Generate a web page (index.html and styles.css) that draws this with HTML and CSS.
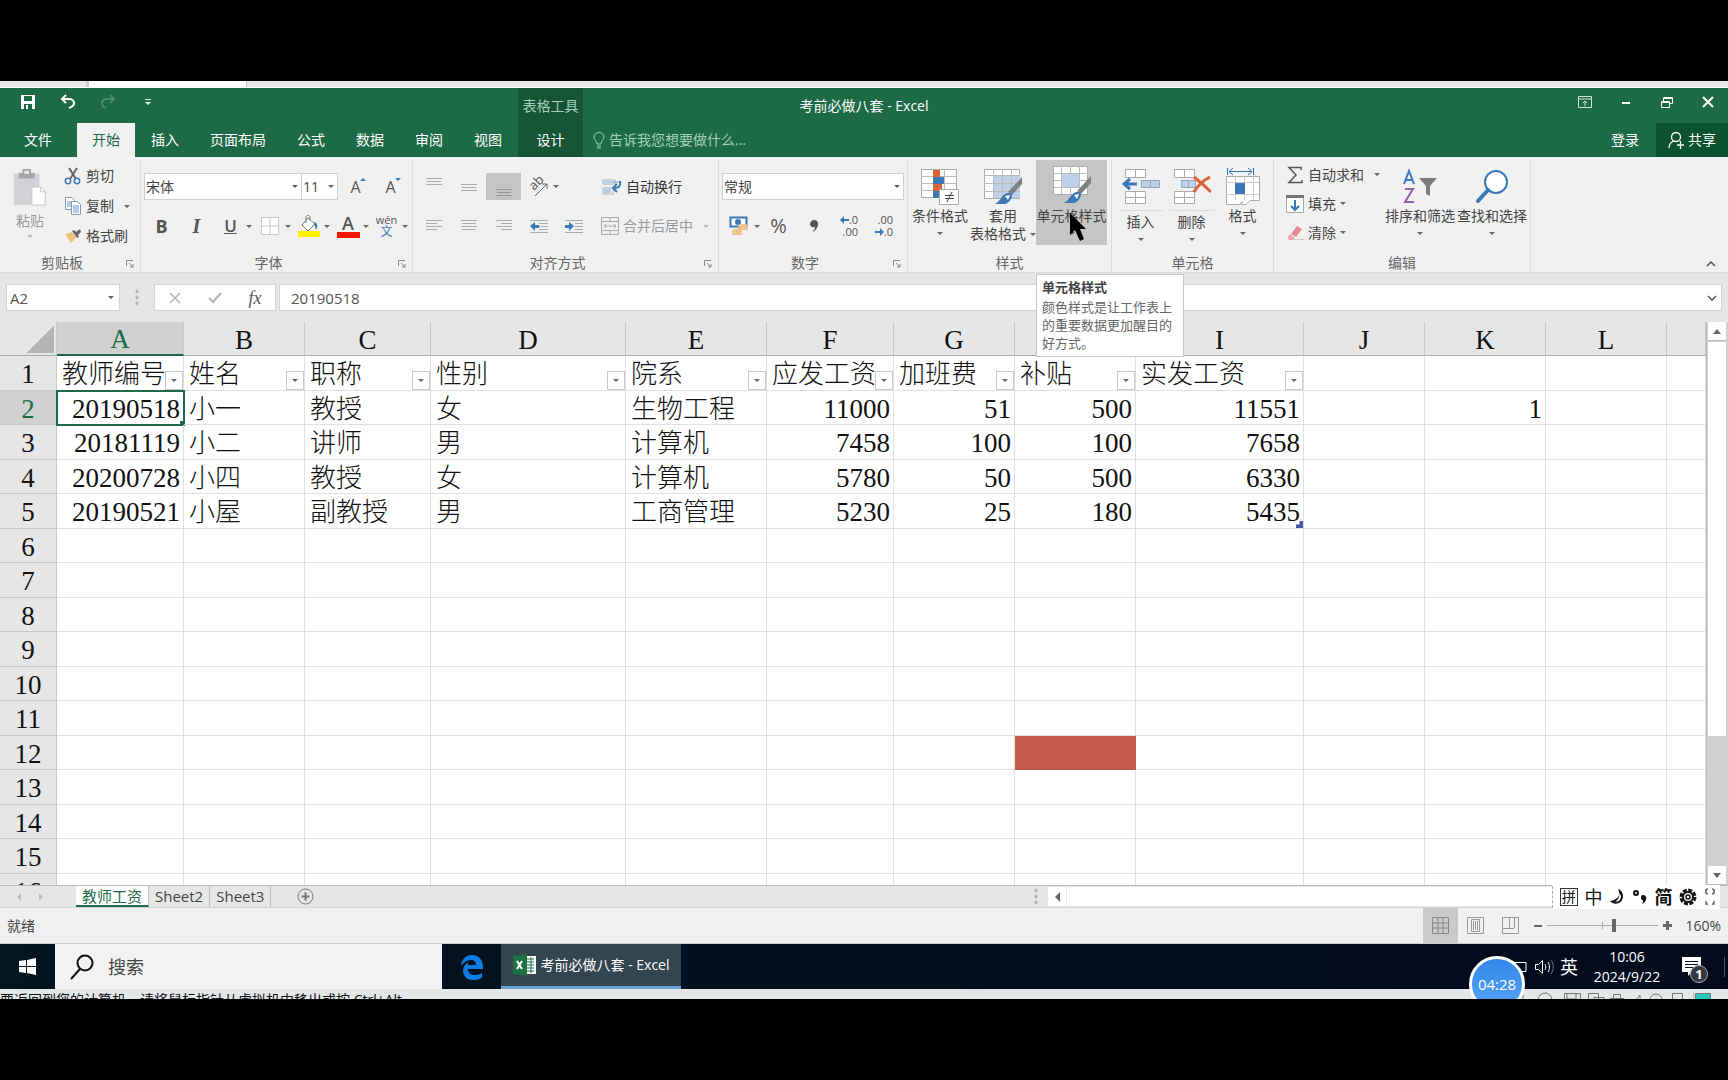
FILE: index.html
```html
<!DOCTYPE html>
<html lang="zh-CN">
<head>
    <meta charset="UTF-8">
    <meta name="viewport" content="width=device-width, initial-scale=1.0">
    <title>考前必做八套 - Excel</title>
    <link rel="stylesheet" href="styles.css">
</head>
<body>
    <div class="screen">
        <div class="back-window"><span></span><span class="back-tab"></span></div>

        <header class="title-bar">
            <div class="title-side">
                <div class="quick-access">
                    <button class="icon-btn" aria-label="保存"><svg width="16" height="16" viewBox="0 0 16 16"><path d="M1 1h14v14H1z" fill="#fff"/><path d="M4 2h8v5H4zM4 10h8v5H4z" fill="#1d6b46"/><path d="M6 11h2v4H6z" fill="#fff"/></svg></button>
                    <button class="icon-btn" aria-label="撤消"><svg width="16" height="16" viewBox="0 0 16 16" fill="none" stroke="#fff" stroke-width="2"><path d="M6 1L2 5l4 4M2 5h7c3 0 5 2 5 4s-2 4-5 5"/></svg></button>
                    <button class="icon-btn" aria-label="恢复"><svg width="16" height="16" viewBox="0 0 16 16" fill="none" stroke="#4b8a6b" stroke-width="2"><path d="M10 1l4 4-4 4M14 5H8C4 5 2 7 2 9s1 4 4 5"/></svg></button>
                    <button class="icon-btn" aria-label="自定义"><svg width="8" height="8" viewBox="0 0 8 8" fill="#dfeee6"><path d="M1 1h6v1H1zM1 4h6L4 7z"/></svg></button>
                </div>
                <div class="context-title">表格工具</div>
            </div>
            <h1>考前必做八套 - Excel</h1>
            <div class="title-side window-controls">
                <button class="icon-btn" aria-label="功能区显示选项"><svg width="14" height="12" viewBox="0 0 14 12" fill="none" stroke="#cfe3d8"><path d="M.5.5h13v11H.5zM.5 3h13M7 10V5M5 7l2-2 2 2"/></svg></button>
                <button class="icon-btn" aria-label="最小化"><svg width="8" height="8" viewBox="0 0 8 8"><path d="M0 4h8v2H0z" fill="#fff"/></svg></button>
                <button class="icon-btn" aria-label="还原"><svg width="12" height="12" viewBox="0 0 12 12" fill="none" stroke="#fff"><path d="M.5 5.5h8v6h-8zM.5 6.5h8M2.500 5V1.500h9v6h-3M2.500 2.500h9"/></svg></button>
                <button class="icon-btn" aria-label="关闭"><svg width="12" height="12" viewBox="0 0 12 12" stroke="#fff" stroke-width="2"><path d="M1 1l10 10M11 1L1 11"/></svg></button>
            </div>
        </header>

        <nav class="tabs">
            <button class="tab file-tab">文件</button>
            <button class="tab active">开始</button>
            <button class="tab">插入</button>
            <button class="tab">页面布局</button>
            <button class="tab">公式</button>
            <button class="tab">数据</button>
            <button class="tab">审阅</button>
            <button class="tab">视图</button>
            <button class="tab context-tab">设计</button>
            <button class="tell-me"><svg width="12" height="17" viewBox="0 0 12 17" fill="none" stroke="#a5cdb8"><path d="M4 12c0-3-3-4-3-7a5 4.500 0 0 1 10 0c0 3-3 4-3 7zM4 14h4M4 16h4"/></svg>告诉我您想要做什么...</button>
            <button class="tab sign-in">登录</button>
            <button class="tab share"><svg width="16" height="18" viewBox="0 0 16 18" fill="none" stroke="#fff" stroke-width="1.300"><circle cx="8" cy="6" r="4.500"/><path d="M1 17c0-4 2-6 5-7M9 14h7M12.500 10v8"/></svg>共享</button>
        </nav>

        <section class="ribbon">
            <div class="group clipboard">
                <div class="group-body">
                    <button class="big-btn paste disabled">
                        <svg width="36" height="40" viewBox="0 0 36 40"><path d="M1 6h27v33H1z" fill="#d3d1d5"/><path d="M6 5h4V1h9v4h4v6H6z" fill="#a7a7a7"/><path d="M12 3h5v3h-5z" fill="#eee"/><path d="M20 20h9l5 5v14H20z" fill="#fff" stroke="#c4c4c4"/><path d="M29 20v5h5" fill="none" stroke="#c4c4c4"/></svg>
                        <span>粘贴</span><i class="caret"></i>
                    </button>
                    <div class="stack">
                        <button class="small-btn"><svg width="18" height="18" viewBox="0 0 18 18" fill="none" stroke-width="1.500"><path d="M5 1l7 11M13 1L6 12" stroke="#666" stroke-width="2"/><circle cx="4" cy="14" r="2.700" stroke="#3b78b5"/><circle cx="13" cy="14" r="2.700" stroke="#3b78b5"/></svg>剪切</button>
                        <button class="small-btn"><svg width="18" height="18" viewBox="0 0 18 18" fill="#fff" stroke="#8b9aab"><path d="M1.500.5h6l3 3v9h-9z"/><path d="M3 5h5M3 7h4M3 9h4" stroke="#5f9ad0"/><path d="M7.500 4.500h6l3 3v10h-9z"/><path d="M9 9h6M9 11h6M9 13h6M9 15h6" stroke="#5f9ad0"/></svg>复制<i class="caret spaced"></i></button>
                        <button class="small-btn"><svg width="18" height="16" viewBox="0 0 18 16"><path d="M1 6l7-2 4 6-5 5z" fill="#efc27b"/><path d="M8 3l2-1 2 2 4-3 1 3-3 3 1 2-2 1z" fill="#666"/></svg>格式刷</button>
                    </div>
                </div>
                <div class="group-name with-launcher">剪贴板<svg class="launcher" width="8" height="8" viewBox="0 0 8 8"><path d="M.5 6V.5H7M3 3l4 4M7 4v3H4" fill="none" stroke="#888"/></svg></div>
            </div>

            <div class="group font">
                <div class="group-body rows">
                    <div class="row">
                        <label class="combo font-name"><input type="text" value="宋体" aria-label="字体"><i class="caret"></i></label>
                        <label class="combo font-size"><input type="text" value="11" aria-label="字号"><i class="caret"></i></label>
                        <button class="tool" aria-label="增大字号"><span class="letter grow">A<i class="up"></i></span></button>
                        <button class="tool" aria-label="减小字号"><span class="letter grow">A<i class="down"></i></span></button>
                    </div>
                    <div class="row">
                        <button class="tool bold">B</button>
                        <button class="tool italic">I</button>
                        <button class="tool split underline"><span>U</span><i class="caret"></i></button>
                        <button class="tool split" aria-label="边框"><svg width="18" height="18" viewBox="0 0 18 18"><path d="M.5.5h17v17H.5zM9 0v18M0 9h18" fill="#fff" stroke="#c9c9c9"/></svg><i class="caret"></i></button>
                        <button class="tool split" aria-label="填充颜色"><svg width="22" height="22" viewBox="0 0 22 22"><path d="M10 3l7 6-7 7-6-6z" fill="#fff" stroke="#777"/><path d="M8 8V2c0-2 4-2 4 0v3" fill="none" stroke="#777"/><path d="M16 7c4 1 4 5 2 8-1-3-1-5-2-8z" fill="#3b78b5"/><path d="M0 16h22v6H0z" fill="#fff200"/></svg><i class="caret"></i></button>
                        <button class="tool split font-color" aria-label="字体颜色"><span>A</span><i class="caret"></i></button>
                        <button class="tool split pinyin" aria-label="拼音"><span>wén<b>文</b></span><i class="caret"></i></button>
                    </div>
                </div>
                <div class="group-name with-launcher">字体<svg class="launcher" width="8" height="8" viewBox="0 0 8 8"><path d="M.5 6V.5H7M3 3l4 4M7 4v3H4" fill="none" stroke="#888"/></svg></div>
            </div>

            <div class="group align">
                <div class="group-body rows">
                    <div class="row">
                        <button class="tool" aria-label="顶端对齐"><svg width="16" height="20" viewBox="0 0 16 20" stroke="#aaa"><path d="M0 1.500h16M1 4.500h14M0 7.500h16"/></svg></button>
                        <button class="tool" aria-label="垂直居中"><svg width="16" height="20" viewBox="0 0 16 20" stroke="#aaa"><path d="M0 7.500h16M1 10.500h14M0 13.500h16"/></svg></button>
                        <button class="tool pressed" aria-label="底端对齐"><svg width="16" height="20" viewBox="0 0 16 20" stroke="#999"><path d="M0 12.500h16M1 15.500h14M0 18.500h16"/></svg></button>
                        <button class="tool split" aria-label="方向"><svg class="ab" width="20" height="20" viewBox="0 0 20 20"><text class="ab-text" x="0" y="0" transform="translate(6 14) rotate(-45)">ab</text><path d="M7 19L19 7M14 7h5v5" fill="none" stroke="#666"/></svg><i class="caret"></i></button>
                        <button class="small-btn wrap-text"><svg width="20" height="18" viewBox="0 0 20 18" fill="none"><path d="M1 2h12v4H1zM1 10h10v6H1z" fill="#fff" stroke="#aaa"/><path d="M2 4h15M2 12h7M2 14h7" stroke="#5f9ad0"/><path d="M18 3c1 5-1 7-5 7M15 6l-4 4 4 4" stroke="#3b78b5" stroke-width="2"/></svg>自动换行</button>
                    </div>
                    <div class="row">
                        <button class="tool" aria-label="左对齐"><svg width="16" height="12" viewBox="0 0 16 12" stroke="#aaa"><path d="M0 .5h16M0 3.500h11M0 6.500h16M0 9.500h11"/></svg></button>
                        <button class="tool" aria-label="居中"><svg width="16" height="12" viewBox="0 0 16 12" stroke="#aaa"><path d="M0 .5h16M1 3.500h14M0 6.500h16M1 9.500h14"/></svg></button>
                        <button class="tool" aria-label="右对齐"><svg width="16" height="12" viewBox="0 0 16 12" stroke="#aaa"><path d="M0 .5h16M5 3.500h11M0 6.500h16M5 9.500h11"/></svg></button>
                        <button class="tool" aria-label="减少缩进"><svg width="18" height="14" viewBox="0 0 18 14"><path d="M0 1.500h18M9 4.500h9M9 7.500h9M9 10.500h9M0 13.500h18" stroke="#aaa"/><path d="M0 7l5-4v3h4v3H5v3z" fill="#3b78b5"/></svg></button>
                        <button class="tool" aria-label="增加缩进"><svg width="18" height="14" viewBox="0 0 18 14"><path d="M0 1.500h18M10 4.500h8M10 7.500h8M10 10.500h8M0 13.500h18" stroke="#aaa"/><path d="M9 7L4 3v3H0v3h4v3z" fill="#3b78b5"/></svg></button>
                        <button class="small-btn merge disabled"><svg width="18" height="18" viewBox="0 0 18 18" fill="none" stroke="#aaa"><path d="M.5.5h17v17H.5zM0 4.500h18M0 13.500h18M9 0v4M9 14v4M3 9h12M5 7L3 9l2 2M13 7l2 2-2 2"/></svg>合并后居中<i class="caret"></i></button>
                    </div>
                </div>
                <div class="group-name with-launcher">对齐方式<svg class="launcher" width="8" height="8" viewBox="0 0 8 8"><path d="M.5 6V.5H7M3 3l4 4M7 4v3H4" fill="none" stroke="#888"/></svg></div>
            </div>

            <div class="group number">
                <div class="group-body rows">
                    <div class="row">
                        <label class="combo number-format"><select aria-label="数字格式"><option>常规</option></select><i class="caret"></i></label>
                    </div>
                    <div class="row">
                        <button class="tool split" aria-label="会计数字格式"><svg width="20" height="20" viewBox="0 0 20 20"><path d="M1.500 1.500h16v9h-16z" fill="#fff" stroke="#3b78b5" stroke-width="2"/><circle cx="9" cy="6" r="3" fill="#3b78b5"/><g fill="#f0c487"><ellipse cx="14" cy="10" rx="5" ry="2"/><path d="M9 12h10v2H9z"/><ellipse cx="8" cy="15" rx="5" ry="2"/><path d="M3 17h10v2H3z"/></g></svg><i class="caret"></i></button>
                        <button class="tool percent">%</button>
                        <button class="tool" aria-label="千位分隔样式"><svg width="10" height="14" viewBox="0 0 10 14"><path d="M5 1a4 4 0 0 1 4 4c0 4-3 7-6 8 2-2 3-3 3-5C3 9 1 7 1 5s2-4 4-4z" fill="#555"/></svg></button>
                        <button class="tool decimals"><span><svg width="9" height="8" viewBox="0 0 9 8"><path d="M0 4l4-4v3h5v2H4v3z" fill="#3b78b5"/></svg>.0</span><span>.00</span></button>
                        <button class="tool decimals"><span>.00</span><span><svg width="9" height="8" viewBox="0 0 9 8"><path d="M9 4L5 0v3H0v2h5v3z" fill="#3b78b5"/></svg>.0</span></button>
                    </div>
                </div>
                <div class="group-name with-launcher">数字<svg class="launcher" width="8" height="8" viewBox="0 0 8 8"><path d="M.5 6V.5H7M3 3l4 4M7 4v3H4" fill="none" stroke="#888"/></svg></div>
            </div>

            <div class="group styles">
                <div class="group-body">
                    <button class="big-btn">
                        <svg width="38" height="36" viewBox="0 0 38 36"><path d="M.5.5h35v28H.5z" fill="#fff" stroke="#aaa"/><path d="M12.500 0v28M23.500 0v28M0 7.500h36M0 14.500h36M0 21.500h36" stroke="#bbb"/><path d="M12 1h7v7h-7zM12 15h9v7h-9z" fill="#dd6237"/><path d="M12 8h11v7H12zM12 22h7v7h-7z" fill="#3b78b5"/><path d="M18.500 20.500h19v15h-19z" fill="#fff" stroke="#aaa"/><path d="M24 26.500h9M24 29.500h9M31 23l-5 10" stroke="#444" fill="none"/></svg>
                        <span>条件格式</span><i class="caret"></i>
                    </button>
                    <button class="big-btn table-format">
                        <svg width="38" height="36" viewBox="0 0 38 36"><path d="M.5.5h35v29H.5z" fill="#fff" stroke="#aaa"/><path d="M9 7h27v22H9z" fill="#bdd0e8"/><path d="M9.500 0v30M18.500 0v30M27.500 0v30M0 6.500h36M0 14.500h36M0 22.500h36" stroke="#bbb" fill="none"/><path d="M38 8v7L28 26l-4-3z" fill="#808080"/><path d="M27 24c3 4-2 10-6 11H11c6-3 6-9 12-11z" fill="#3b78b5"/><path d="M21 27l5-1-2 5z" fill="#fff"/></svg>
                        <span>套用</span><span class="second-line">表格格式<i class="caret"></i></span>
                    </button>
                    <div class="hovered-wrap">
                        <button class="big-btn hovered">
                            <svg width="38" height="38" viewBox="0 0 38 38"><path d="M.5.5h34v28H.5z" fill="#fff" stroke="#aaa"/><path d="M8 8h18v13H8z" fill="#bdd0e8"/><path d="M8.500 0v28M17.500 0v8M26.500 0v28M17.500 21v8M0 7.500h35M0 14.500h8M27 14.500h8M0 21.500h35" stroke="#bbb" fill="none"/><path d="M38 10v7L28 28l-4-3z" fill="#808080"/><path d="M27 26c3 4-2 10-6 11H11c6-3 6-9 12-11z" fill="#3b78b5"/><path d="M21 29l5-1-2 5z" fill="#fff"/></svg>
                            <span>单元格样式</span><i class="caret"></i>
                        </button>
                        <svg class="pointer" width="18" height="30" viewBox="0 0 18 30"><path d="M1 1v22l5-5 5 11 4-2-4-10h6z" fill="#000"/></svg>
                        <div class="tooltip"><strong>单元格样式</strong><p>颜色样式是让工作表上的重要数据更加醒目的好方式。</p></div>
                    </div>
                </div>
                <div class="group-name">样式</div>
            </div>

            <div class="group cells">
                <div class="group-body">
                    <button class="big-btn divided">
                        <svg width="38" height="36" viewBox="0 0 38 36"><path d="M3.500.5h20v8h-20zM13.500 0v8M3.500 22.500h20v12h-20zM13.500 22v12M3 28.500h20" fill="#fff" stroke="#aaa"/><path d="M19.500 11.500h18v7h-18zM28.500 11v8" fill="#bdd0e8" stroke="#8fa6bf"/><path d="M15 15H3M8 10l-6 5 6 5" fill="none" stroke="#3b78b5" stroke-width="3"/></svg>
                        <span>插入</span><i class="caret"></i>
                    </button>
                    <button class="big-btn divided">
                        <svg width="38" height="36" viewBox="0 0 38 36"><path d="M1.500.5h20v8h-20zM11.500 0v8M1.500 22.500h20v12h-20zM11.500 22v12M1 28.500h20" fill="#fff" stroke="#aaa"/><path d="M8.500 11.500h14v7h-14zM15.500 11v8" fill="#bdd0e8" stroke="#8fa6bf"/><path d="M21 8c5 4 11 9 17 15M37 8c-6 3-12 8-16 15" fill="none" stroke="#dd6237" stroke-width="3"/></svg>
                        <span>删除</span><i class="caret"></i>
                    </button>
                    <button class="big-btn">
                        <svg width="34" height="38" viewBox="0 0 34 38"><path d="M1.500 0v7M27.500 0v7M3 3.500h23M7 0L3 3.500 7 7M22 0l4 3.500L22 7" fill="none" stroke="#3b78b5"/><path d="M.5 8.500h33v24H24l-4 4h-5l2-3-4 3h-3H.5z" fill="#fff" stroke="#aaa"/><path d="M9.500 8v24M18.500 8v24M27.500 8v24M0 14.500h33M0 26.500h33" stroke="#ccc"/><path d="M9 15h10v11H9z" fill="#3b78b5"/></svg>
                        <span>格式</span><i class="caret"></i>
                    </button>
                </div>
                <div class="group-name">单元格</div>
            </div>

            <div class="group editing">
                <div class="group-body">
                    <div class="stack">
                        <button class="small-btn"><svg width="18" height="18" viewBox="0 0 18 18"><path d="M15 4V1.500H3L10 9l-7 7.500h13V14" fill="none" stroke="#555" stroke-width="1.500"/></svg>自动求和<i class="caret spaced"></i></button>
                        <button class="small-btn"><svg width="18" height="18" viewBox="0 0 18 18"><path d="M.5.5h17v17H.5z" fill="#fff" stroke="#aaa"/><path d="M0 0h18v3H0z" fill="#777"/><path d="M9 5v10M5 11l4 4 4-4" fill="none" stroke="#3b78b5" stroke-width="2"/></svg>填充<i class="caret"></i></button>
                        <button class="small-btn"><svg width="18" height="16" viewBox="0 0 18 16"><path d="M11 1l5 3-6 8-5-3z" fill="#e58a94"/><path d="M4 9l5 4-2 2H3l-1-3z" fill="#eba5ac"/><path d="M7 14.500h11" stroke="#ccc"/></svg>清除<i class="caret"></i></button>
                    </div>
                    <button class="big-btn sort">
                        <svg width="36" height="36" viewBox="0 0 36 36"><g fill="none" stroke-width="2"><path d="M2 15L7 2l5 13M4 11h6" stroke="#3b78b5"/><path d="M3 20h8L3 33h9" stroke="#8b62ab"/></g><path d="M17 9h18l-7 8v10l-4-2v-8z" fill="#7d7d7d"/></svg>
                        <span>排序和筛选</span><i class="caret"></i>
                    </button>
                    <button class="big-btn find">
                        <svg width="36" height="36" viewBox="0 0 36 36"><circle cx="22" cy="13" r="11" fill="#fff" stroke="#3b78b5" stroke-width="2"/><path d="M14 21L4 32" stroke="#3b78b5" stroke-width="4" stroke-linecap="round"/></svg>
                        <span>查找和选择</span><i class="caret"></i>
                    </button>
                </div>
                <div class="group-name">编辑</div>
            </div>
            <button class="collapse" aria-label="折叠功能区"><svg width="10" height="6" viewBox="0 0 10 6" fill="none" stroke="#555" stroke-width="1.500"><path d="M1 5l4-4 4 4"/></svg></button>
        </section>

        <section class="formula-bar">
            <label class="name-box"><input type="text" value="A2" aria-label="名称框"><i class="caret"></i></label>
            <div class="dots"></div>
            <div class="formula-tools">
                <button aria-label="取消"><svg width="12" height="12" viewBox="0 0 12 12" stroke="#b5b5b5" stroke-width="1.500"><path d="M1 1l10 10M11 1L1 11"/></svg></button>
                <button aria-label="输入"><svg width="14" height="12" viewBox="0 0 14 12" fill="none" stroke="#b5b5b5" stroke-width="2"><path d="M1 6l4 4 8-9"/></svg></button>
                <button class="fx">fx</button>
            </div>
            <label class="formula-input"><input type="text" value="20190518" aria-label="编辑栏"><svg width="10" height="6" viewBox="0 0 10 6" fill="none" stroke="#555" stroke-width="1.500"><path d="M1 1l4 4 4-4"/></svg></label>
        </section>

        <main class="sheet">
            <div class="grid">
                <table>
                    <colgroup>
                        <col class="w-head"><col class="w-a"><col class="w-s"><col class="w-c"><col class="w-d"><col class="w-e"><col class="w-a"><col class="w-s"><col class="w-s"><col class="w-i"><col class="w-s"><col class="w-s"><col class="w-s"><col>
                    </colgroup>
                    <thead><tr id="letters"></tr></thead>
                    <tbody id="cells"></tbody>
                </table>
            </div>
            <div class="v-scroll">
                <button aria-label="向上滚动"><i class="up"></i></button>
                <div class="thumb"></div>
                <button class="scroll-down" aria-label="向下滚动"><i class="down"></i></button>
            </div>
        </main>

        <div class="sheet-tabs">
            <div class="sheet-nav"><i class="left"></i><i class="right"></i></div>
            <button class="sheet-tab current">教师工资</button>
            <button class="sheet-tab">Sheet2</button>
            <button class="sheet-tab">Sheet3</button>
            <button class="add-sheet" aria-label="新工作表"><svg width="17" height="17" viewBox="0 0 17 17" fill="none" stroke="#777"><circle cx="8.500" cy="8.500" r="7.500"/><path d="M8.500 4.500v8M4.500 8.500h8" stroke-width="2"/></svg></button>
            <div class="h-scroll">
                <div class="dots"></div>
                <button aria-label="向左滚动"><i class="left"></i></button>
                <div class="h-thumb"></div>
            </div>
            <div class="ime">
                <span class="ime-grip"></span><span class="ime-box">拼</span><span>中</span>
                <svg width="16" height="18" viewBox="0 0 16 18"><path d="M9 1c3 6 0 11-8 12 4 5 13 3 13-5 0-3-2-6-5-7z" fill="#111"/><path d="M10 5c1 4-1 7-4 9 4 0 6-3 6-6 0-1-1-2-2-3z" fill="#fff"/></svg>
                <svg width="16" height="18" viewBox="0 0 16 18"><circle cx="4" cy="5" r="2" fill="none" stroke="#111" stroke-width="2"/><path d="M11 7c5 0 4 7-1 9 2-3 1-4-1-5 0-2 0-4 2-4z" fill="#111"/></svg>
                <span class="ime-bold">简</span>
                <svg width="18" height="18" viewBox="0 0 18 18" fill="none" stroke="#111"><circle cx="9" cy="9" r="7" stroke-width="3" stroke-dasharray="4 1.500"/><circle cx="9" cy="9" r="5" stroke-width="2"/><circle cx="9" cy="9" r="2" stroke-width="1.500"/></svg>
                <svg class="ime-last" width="12" height="18" viewBox="0 0 12 18" fill="none" stroke="#666" stroke-width="1.500"><path d="M4 1c-3 0-3 5 0 5M8 1c3 0 3 5 0 5M2 13v3h2M10 13v3H8"/></svg>
            </div>
        </div>

        <footer class="status">
            <span>就绪</span>
            <div class="status-right">
                <button class="view on" aria-label="普通"><svg width="17" height="17" viewBox="0 0 17 17" fill="none" stroke="#888"><path d="M.5.5h16v16H.5zM6 0v17M11 0v17M0 6h17M0 11h17"/></svg></button>
                <button class="view" aria-label="页面布局"><svg width="17" height="17" viewBox="0 0 17 17" fill="none" stroke="#999"><path d="M.5.5h16v16H.5zM4.500 2.500h8v12h-8zM6.500 4v9M8.500 4v9M10.500 4v9"/></svg></button>
                <button class="view" aria-label="分页预览"><svg width="17" height="17" viewBox="0 0 17 17" fill="none" stroke="#999"><path d="M.5.5h16v16H.5zM0 11.500h12M7.500 0v11M12.500 0v11"/></svg></button>
                <button class="zoom-step" aria-label="缩小"><svg width="8" height="8" viewBox="0 0 8 8"><path d="M0 3h8v2H0z" fill="#666"/></svg></button>
                <input class="zoom" type="range" min="0" max="100" value="60" aria-label="缩放">
                <button class="zoom-step" aria-label="放大"><svg width="9" height="9" viewBox="0 0 9 9"><path d="M0 3h3V0h3v3h3v3H6v3H3V6H0z" fill="#666"/></svg></button>
                <span>160%</span>
            </div>
        </footer>

        <div class="taskbar">
            <button class="start" aria-label="开始"><svg width="17" height="17" viewBox="0 0 17 17" fill="#fff"><path d="M0 3l7-1v6H0zM8 2l9-2v8H8zM0 9h7v6l-7-1zM8 9h9v8l-9-2z"/></svg></button>
            <label class="search"><svg width="26" height="26" viewBox="0 0 26 26" fill="none" stroke="#111" stroke-width="2"><circle cx="16" cy="9" r="7.500"/><path d="M11 15L2 25"/></svg><input type="text" placeholder="搜索" aria-label="搜索"></label>
            <button class="edge" aria-label="Edge"><svg width="24" height="26" viewBox="0 0 24 26"><path d="M1 12C2 4 7 1 12 1c7 0 11 5 11 12v2H8c0 4 3 6 7 6 3 0 5-1 7-2v5c-3 1-5 2-9 2C6 26 3 21 3 17c0-4 2-7 6-9-1 1-1 2-1 3h8c0-3-2-5-5-5-4 0-7 2-10 6z" fill="#0f7de0"/></svg></button>
            <button class="task"><svg width="24" height="22" viewBox="0 0 24 22"><path d="M11 2h12v18H11z" fill="#fff"/><path d="M0 2l14-2v22L0 20z" fill="#1d7145"/><path d="M14 5h7M14 8h7M14 11h7M14 14h7M14 17h7M18 3v16" stroke="#1d7145"/><path d="M4 7l5 8M9 7l-5 8" stroke="#fff" stroke-width="2"/></svg>考前必做八套 - Excel</button>
            <div class="tray">
                <svg width="14" height="14" viewBox="0 0 14 14" fill="none" stroke="#fff"><path d="M0 2.500h12v9H0"/></svg>
                <svg width="20" height="16" viewBox="0 0 20 16" fill="none" stroke="#fff"><path d="M1.500 5.500h3l4-4v13l-4-4h-3zM11 5c1 2 1 4 0 6M14 3c2 3 2 7 0 10"/><path d="M17 1c3 4 3 10 0 14" stroke="#6b7482"/></svg>
                <span class="lang">英</span>
                <div class="clock"><span>10:06</span><span>2024/9/22</span></div>
                <div class="notice"><svg width="20" height="20" viewBox="0 0 20 20"><path d="M0 0h19v15h-9l-4 4v-4H0z" fill="#fff"/><path d="M3 4.500h13M3 7.500h13M3 10.500h9" stroke="#0a1420"/></svg><b>1</b></div>
            </div>
            <div class="timer">04:28</div>
        </div>

        <div class="vm-strip">
            <span>要返回到您的计算机，请将鼠标指针从虚拟机中移出或按 Ctrl+Alt</span>
            <svg width="202" height="14" viewBox="0 0 202 14" fill="none" stroke="#777"><path d="M0 3.500h14v8H0zM55.500 2.500h16v11h-16zM58 3v5h9V3M79.500 2.500h10v8h-10zM85 6.500h10v7H85zM104.500 3.500h7v4h-7zM101 7.500h14v5h-14zM124 9h3l4-5v9M163.500 2.500h10v11h-10z"/><circle cx="36" cy="9" r="7"/><circle cx="147" cy="9" r="6"/><path d="M184.500 0v14" stroke="#bbb"/><path d="M186.500 2.500h15v11h-15z" fill="#25c9bd"/></svg>
        </div>
    </div>

    <script>
        const letters = ["A", "B", "C", "D", "E", "F", "G", "H", "I", "J", "K", "L", ""];
        const fields = ["教师编号", "姓名", "职称", "性别", "院系", "应发工资", "加班费", "补贴", "实发工资"];
        const records = [
            [20190518, "小一", "教授", "女", "生物工程", 11000, 51, 500, 11551, "", 1],
            [20181119, "小二", "讲师", "男", "计算机", 7458, 100, 100, 7658],
            [20200728, "小四", "教授", "女", "计算机", 5780, 50, 500, 6330],
            [20190521, "小屋", "副教授", "男", "工商管理", 5230, 25, 180, 5435]
        ];

        document.getElementById("letters").innerHTML = `<th class="corner"></th>` +
            letters.map((letter, i) => `<th class="${i === 0 ? "selected" : ""}">${letter}</th>`).join("");

        let rows = "";
        for (let r = 1; r <= 16; r++) {
            rows += `<tr><th class="${r === 2 ? "selected" : ""}">${r}</th>`;
            letters.forEach((letter, c) => {
                let value = "";
                let cls = [];
                if (r === 1 && fields[c]) {
                    value = `${fields[c]}<button class="filter" aria-label="筛选"><i class="down"></i></button>`;
                } else if (r > 1 && records[r - 2] && records[r - 2][c] !== undefined) {
                    value = records[r - 2][c];
                    if (typeof value === "number") cls.push("num");
                }
                if (r === 2 && c === 0) cls.push("active-cell");
                if (r === 5 && c === 8) cls.push("table-end");
                if (r === 12 && c === 7) cls.push("red");
                rows += `<td class="${cls.join(" ")}">${value}</td>`;
            });
            rows += "</tr>";
        }
        document.getElementById("cells").innerHTML = rows;
    </script>
</body>
</html>
```
FILE: styles.css
```css
* {
    margin: 0;
    padding: 0;
    box-sizing: border-box;
}

body {
    font-family: "Open Sans", "Noto Sans CJK SC", sans-serif;
    font-size: 14px;
    line-height: 18px;
    color: #444;
    background-color: #000;
    height: 100vh;
    padding: 81px 0;
    overflow: hidden;
}

button, input, select {
    font: inherit;
    color: inherit;
    background: none;
    border: none;
    outline: none;
    appearance: none;
    border-radius: 0;
    min-width: 0;
}

svg {
    display: block;
    flex: none;
}

.screen {
    height: 100%;
    display: flex;
    flex-direction: column;
    background-color: #e6e6e6;
    overflow: hidden;
}

/* small triangles */
.caret, .up, .down, .left, .right {
    display: inline-block;
    flex: none;
    border: 3px solid transparent;
}

.caret, .down {
    border-top-color: #666;
    border-bottom-width: 0;
}

.up {
    border-bottom-color: #666;
    border-top-width: 0;
}

.left {
    border-right-color: #666;
    border-left-width: 0;
}

.right {
    border-left-color: #666;
    border-right-width: 0;
}

.disabled {
    color: #999;
}

.disabled .caret {
    border-top-color: #bbb;
}

/* title bar */
.back-window {
    display: flex;
    height: 7px;
    border-bottom: 1px solid #fff;
}

.back-window span {
    width: 89px;
    border-right: 3px solid #ccc;
}

.back-window .back-tab {
    width: 158px;
    background-color: #fff;
    border-right: 1px solid #ccc;
}

.title-bar {
    display: flex;
    height: 35px;
    background-color: #1d6b46;
    color: #fff;
}

.title-side {
    flex: 1;
    display: flex;
}

h1 {
    font-size: 14px;
    line-height: 35px;
    font-weight: 400;
}

.quick-access {
    width: 518px;
    padding-left: 8px;
    display: flex;
}

.window-controls {
    justify-content: flex-end;
}

.icon-btn {
    width: 40px;
    height: 28px;
    display: flex;
    align-items: center;
    justify-content: center;
}

.window-controls .icon-btn {
    width: 41px;
}

.context-title {
    width: 65px;
    line-height: 35px;
    text-align: center;
    background-color: #165437;
    color: #a5cdb8;
}

.tabs {
    display: flex;
    height: 34px;
    gap: 1px;
    background-color: #1d6b46;
    color: #fff;
}

.tab {
    padding: 0 15px;
}

.file-tab {
    width: 76px;
}

.tab.active {
    background-color: #f1f1f1;
    color: #1d6b46;
}

.context-tab {
    width: 65px;
    background-color: #165437;
}

.tell-me {
    display: flex;
    align-items: center;
    gap: 4px;
    padding: 0 9px;
    color: #a5cdb8;
}

.sign-in {
    margin-left: auto;
    margin-right: 1px;
}

.share {
    width: 72px;
    padding: 0 8px;
    display: flex;
    align-items: center;
    justify-content: center;
    gap: 4px;
    background-color: #0b5230;
}

/* ribbon */
.ribbon {
    display: flex;
    height: 116px;
    padding-top: 3px;
    background-color: #f1f1f1;
    border-bottom: 1px solid #dcdcdc;
}

.group {
    display: flex;
    flex-direction: column;
    border-right: 1px solid #dcdcdc;
}

.group-body {
    height: 93px;
    display: flex;
}

.group-name {
    position: relative;
    height: 19px;
    line-height: 20px;
    text-align: center;
    color: #666;
}

.with-launcher {
    padding-right: 16px;
}

.launcher {
    position: absolute;
    right: 6px;
    bottom: 4px;
}

.clipboard { width: 141px; }
.font { width: 272px; }
.align { width: 306px; }
.number { width: 189px; }
.styles { width: 204px; }
.cells { width: 162px; }
.editing { width: 257px; }

.stack {
    display: flex;
    flex-direction: column;
}

.small-btn {
    height: 30px;
    display: flex;
    align-items: center;
    gap: 4px;
    white-space: nowrap;
}

.editing .small-btn {
    height: 29px;
}

.spaced {
    margin-left: 6px;
}

.big-btn {
    display: flex;
    flex-direction: column;
    align-items: center;
    padding-top: 8px;
    height: 85px;
    white-space: nowrap;
}

.big-btn svg {
    height: 38px;
    margin-bottom: 1px;
}

.big-btn .caret {
    margin-top: 7px;
}

.paste {
    width: 60px;
    gap: 5px;
}

.paste .caret {
    margin-top: 0;
}

.clipboard .stack {
    padding: 1px 0 0 4px;
}

.rows {
    flex-direction: column;
    gap: 7px;
    padding: 13px 0 0 3px;
}

.row {
    display: flex;
    height: 27px;
}

.row + .row {
    height: 38px;
    align-items: center;
}

.combo {
    display: flex;
    align-items: center;
    background-color: #fff;
    border: 1px solid #d0d0d0;
    padding-right: 3px;
}

.combo input, .combo select {
    flex: 1;
    width: 0;
    padding-left: 1px;
}

.font-name { width: 158px; }
.font-size { width: 36px; border-left: none; }
.number-format { width: 182px; }

.tool {
    width: 35px;
    height: 27px;
    display: flex;
    align-items: center;
    justify-content: center;
    color: #555;
}

.tool.pressed {
    background-color: #c5c5c5;
}

.split {
    width: 39px;
}

.split > :first-child {
    width: 30px;
    text-align: center;
}

.letter {
    position: relative;
    font-size: 16px;
}

.grow i {
    position: absolute;
    right: -5px;
    top: 0;
}

.grow .up { border-bottom-color: #3b78b5; }
.grow .down { border-top-color: #3b78b5; }

.bold {
    font-size: 18px;
    font-weight: 700;
}

.italic {
    font-family: "Liberation Serif", serif;
    font-size: 20px;
    font-weight: 700;
    font-style: italic;
}

.underline {
    font-size: 17px;
    font-weight: 600;
    text-decoration: underline;
}

.font-color {
    font-size: 18px;
    font-weight: 600;
}

.font-color > :first-child {
    width: 23px;
    height: 23px;
    margin: 0 3px 0 4px;
    line-height: 17px;
    border-bottom: 6px solid #f81504;
}

.pinyin > span {
    font-size: 11px;
    line-height: 11px;
}

.pinyin b {
    display: block;
    font-size: 12px;
    line-height: 14px;
    font-weight: 400;
    color: #3b78b5;
}

.ab {
    overflow: visible;
}

.ab-text {
    font-size: 13px;
    fill: #555;
}

.wrap-text {
    height: 27px;
    margin-left: 42px;
    color: #333;
}

.merge {
    margin-left: 10px;
}

.merge .caret {
    margin-left: 6px;
}

.percent {
    font-size: 20px;
}

.decimals {
    flex-direction: column;
    align-items: flex-end;
    padding-right: 8px;
    font-size: 11px;
    line-height: 12px;
}

.decimals span {
    display: flex;
    align-items: center;
}

.decimals svg {
    margin: 0;
}

.styles .group-body {
    padding-left: 2px;
}

.styles .big-btn {
    width: 60px;
}

.styles .table-format {
    width: 66px;
}

.second-line {
    display: flex;
    align-items: center;
    gap: 4px;
}

.big-btn .second-line .caret {
    margin-top: 0;
}

.hovered-wrap {
    position: relative;
}

.styles .hovered {
    width: 71px;
    padding-top: 6px;
    background-color: #c5c5c5;
}

.hovered svg {
    margin-bottom: 3px;
}

.pointer {
    position: absolute;
    left: 33px;
    top: 52px;
}

.tooltip {
    position: absolute;
    left: 0;
    top: 114px;
    z-index: 5;
    width: 148px;
    padding: 3px 5px 4px;
    background-color: #fff;
    border: 1px solid #c8c8c8;
    font-size: 13px;
    color: #666;
}

.tooltip strong {
    display: block;
    color: #444;
}

.tooltip p {
    margin-top: 2px;
}

.cells .group-body {
    padding-left: 3px;
}

.cells .big-btn {
    width: 51px;
}

.divided span {
    width: 44px;
    margin-top: 3px;
    padding-top: 2px;
    border-top: 1px solid #dcdcdc;
    text-align: center;
}

.editing .stack {
    width: 110px;
    padding-left: 12px;
}

.editing .big-btn {
    width: 72px;
}

.collapse {
    margin: auto 12px 5px auto;
}

/* formula bar */
.formula-bar {
    display: flex;
    height: 49px;
    padding: 11px 6px 11px;
    font-size: 15px;
    color: #555;
}

.formula-bar > label, .formula-tools {
    display: flex;
    align-items: center;
    background-color: #fff;
    border: 1px solid #d5d5d5;
}

.name-box {
    width: 114px;
    padding: 0 5px 0 3px;
}

.name-box input {
    flex: 1;
}

.dots {
    width: 34px;
    display: flex;
    background: radial-gradient(circle, #aaa 1px, transparent 2px) center / 6px 6px repeat-y;
    margin: 5px 0;
}

.formula-tools {
    width: 122px;
    margin-right: 3px;
}

.formula-tools button {
    width: 40px;
    display: flex;
    justify-content: center;
}

.formula-tools .fx {
    font-family: "Liberation Serif", serif;
    font-size: 18px;
    font-style: italic;
}

.formula-input {
    flex: 1;
    padding: 0 4px 0 11px;
}

.formula-input input {
    flex: 1;
}

/* worksheet */
.sheet {
    flex: 1;
    min-height: 0;
    display: flex;
}

.grid {
    flex: 1;
    overflow: hidden;
    background-color: #fff;
    border-right: 1px solid #bbb;
}

table {
    width: 100%;
    table-layout: fixed;
    border-collapse: separate;
    border-spacing: 0;
    font-family: "Liberation Serif", "Noto Sans CJK SC", serif;
    font-size: 27px;
    line-height: 29px;
    color: #111;
}

.w-head { width: 57px; }
.w-a { width: 127px; }
.w-s { width: 121px; }
.w-c { width: 126px; }
.w-d { width: 195px; }
.w-e { width: 141px; }
.w-i { width: 168px; }

tr {
    height: 34px;
}

tbody tr:nth-child(odd) {
    height: 35px;
}

th {
    padding-top: 3px;
    font-weight: 400;
    background-color: #e6e6e6;
    border-right: 1px solid #c8c8c8;
    border-bottom: 1px solid #c8c8c8;
}

thead th {
    border-bottom-color: #aaa;
}

.corner {
    background: linear-gradient(135deg, transparent 50%, #b5b5b5 50%) 26px 3px / 28px 28px no-repeat #e6e6e6;
}

th.selected {
    background-color: #d0d0d0;
    color: #1d6b46;
}

thead th.selected {
    border-bottom: 2px solid #1d6b46;
}

td {
    position: relative;
    padding: 3px 4px 0 5px;
    white-space: nowrap;
    font-size: 26px;
    font-weight: 300;
    border-right: 1px solid #e0e0e0;
    border-bottom: 1px solid #e0e0e0;
}

td.num {
    padding-right: 3px;
    font-size: 27px;
    text-align: right;
}

.active-cell {
    outline: 2px solid #1d6b46;
    outline-offset: -1px;
}

.active-cell::after, .table-end::after {
    content: "";
    position: absolute;
    right: -2px;
    bottom: -2px;
    width: 5px;
    height: 5px;
    background-color: #1d6b46;
}

.table-end::after {
    right: 0;
    bottom: 0;
    width: 7px;
    height: 7px;
    background-color: #4556a5;
    clip-path: polygon(50% 0, 100% 0, 100% 100%, 0 100%, 0 50%, 50% 50%);
}

.red {
    background-color: #c75a4b;
    border-color: #c75a4b;
}

.filter {
    position: absolute;
    right: 0;
    bottom: 0;
    width: 18px;
    height: 19px;
    display: flex;
    align-items: center;
    justify-content: center;
    background-color: #fff;
    border: 1px solid #c8c8c8;
}

.v-scroll {
    width: 21px;
    display: flex;
    flex-direction: column;
    padding: 0 2px 0 1px;
    background-color: #d0d0d0;
}

.v-scroll button {
    height: 19px;
    display: flex;
    align-items: center;
    justify-content: center;
    background-color: #fff;
    border-bottom: 1px solid #bbb;
}

.v-scroll i {
    border-left-width: 4px;
    border-right-width: 4px;
}

.v-scroll .up { border-bottom-width: 5px; }
.v-scroll .down { border-top-width: 5px; }

.thumb {
    flex: 0 1 70%;
    margin-top: 1px;
    background-color: #fff;
}

.v-scroll .scroll-down {
    margin-top: auto;
}

/* sheet tabs */
.sheet-tabs {
    position: relative;
    display: flex;
    height: 23px;
    border-top: 1px solid #bbb;
    border-bottom: 1px solid #d5d5d5;
}

.sheet-nav {
    width: 76px;
    padding-left: 17px;
    display: flex;
    align-items: center;
    gap: 18px;
}

.sheet-nav i {
    border-width: 4px;
}

.sheet-nav .left { border-right-color: #bbb; border-left-width: 0; }
.sheet-nav .right { border-left-color: #bbb; border-right-width: 0; }

.sheet-tab {
    padding: 0 6px 2px;
    font-size: 15px;
    line-height: 18px;
    border-right: 1px solid #bbb;
}

.sheet-tab.current {
    width: 73px;
    padding-bottom: 0;
    background-color: #fff;
    color: #1d6b46;
    border-bottom: 2px solid #1d6b46;
}

.add-sheet {
    margin-left: 26px;
}

.h-scroll {
    width: 704px;
    margin: 1px 0 1px auto;
    display: flex;
}

.h-scroll .dots {
    width: 24px;
    margin: 2px 0;
}

.h-scroll button {
    width: 18px;
    display: flex;
    align-items: center;
    justify-content: center;
    background-color: #fff;
}

.h-scroll .left {
    border-width: 5px 5px 5px 0;
}

.h-thumb {
    flex: 1;
    margin: 0 21px 0 1px;
    background-color: #fff;
}

.ime {
    position: absolute;
    right: 8px;
    top: -1px;
    width: 168px;
    height: 24px;
    padding: 0 4px 0 0;
    display: flex;
    align-items: center;
    justify-content: space-between;
    background-color: #fff;
    font-size: 18px;
    color: #111;
}

.ime-grip {
    height: 22px;
    border-left: 1px dashed #aaa;
}

.ime-box {
    width: 18px;
    border: 1px solid #333;
    font-size: 14px;
    line-height: 16px;
    text-align: center;
}

.ime-bold {
    font-weight: 700;
}

/* status bar */
.status {
    display: flex;
    align-items: center;
    justify-content: space-between;
    height: 36px;
    padding: 0 7px;
    background-color: #f1f1f1;
    border-bottom: 1px solid #ccc;
}

.status-right {
    display: flex;
    align-items: center;
}

.view {
    width: 35px;
    height: 35px;
    display: flex;
    align-items: center;
    justify-content: center;
}

.view.on {
    background-color: #cacaca;
}

.zoom-step {
    width: 19px;
    display: flex;
    justify-content: center;
}

.zoom {
    width: 111px;
    height: 14px;
    background: linear-gradient(#aaa, #aaa) center / 100% 1px no-repeat, linear-gradient(#aaa, #aaa) center / 1px 7px no-repeat;
}

.zoom::-webkit-slider-thumb {
    appearance: none;
    width: 4px;
    height: 13px;
    background-color: #666;
}

.status-right span {
    margin-left: 8px;
}

/* taskbar */
.taskbar {
    position: relative;
    display: flex;
    height: 45px;
    background: linear-gradient(90deg, #021520, #020a1c);
    color: #fff;
}

.taskbar button {
    display: flex;
    align-items: center;
    justify-content: center;
}

.start {
    width: 55px;
}

.search {
    width: 387px;
    padding-left: 14px;
    display: flex;
    align-items: center;
    gap: 13px;
    background-color: #f2f2f2;
    color: #333;
}

.search input {
    flex: 1;
    font-size: 18px;
}

.search input::placeholder {
    color: #444;
}

.edge {
    width: 59px;
}

.task {
    width: 180px;
    gap: 4px;
    background-color: #33454f;
    border-bottom: 3px solid #6ba0d8;
}

.tray {
    margin-left: auto;
    padding-right: 3px;
    display: flex;
    align-items: center;
    gap: 6px;
}

.lang {
    font-size: 18px;
}

.clock {
    width: 86px;
    display: flex;
    flex-direction: column;
    line-height: 20px;
    text-align: center;
}

.notice {
    position: relative;
    width: 49px;
    padding-left: 6px;
    border-right: 1px solid #4a5560;
}

.notice b {
    position: absolute;
    left: 14px;
    top: 8px;
    width: 18px;
    height: 18px;
    border: 1px solid #aaa;
    border-radius: 50%;
    background-color: #333a42;
    font-size: 13px;
    line-height: 16px;
    text-align: center;
}

.timer {
    position: absolute;
    right: 203px;
    top: 12px;
    z-index: 2;
    width: 56px;
    height: 56px;
    border: 3px solid #fff;
    border-radius: 50%;
    background: linear-gradient(#3387e8, #55a5fa);
    font-size: 15px;
    line-height: 50px;
    text-align: center;
}

.vm-strip {
    display: flex;
    justify-content: space-between;
    height: 10px;
    padding: 2px 17px 0 0;
    background-color: #e3e7e8;
    color: #111;
    overflow: hidden;
}

.vm-strip span {
    white-space: nowrap;
}
```
